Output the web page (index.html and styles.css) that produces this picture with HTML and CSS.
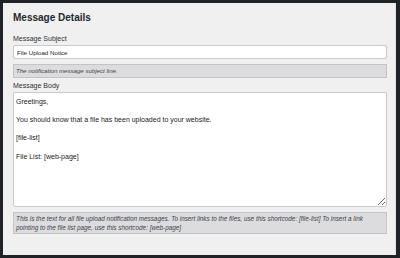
FILE: index.html
```html
<!DOCTYPE html>
<html lang="en">
<head>
  <meta charset="UTF-8" />
  <meta name="viewport" content="width=device-width, initial-scale=1.0"/>
  <title>Message Details</title>
  <link rel="stylesheet" href="styles.css">
</head>
<body>

<div class="panel">
  <h2 class="title">Message Details</h2>

  <label class="field-label" for="subject">Message Subject</label>
  <input class="text-input" id="subject" type="text" value="File Upload Notice" readonly>
  <p class="description">The notification message subject line.</p>

  <label class="field-label" for="body">Message Body</label>
  <textarea class="text-area" id="body" readonly>Greetings,

You should know that a file has been uploaded to your website.

[file-list]

File List: [web-page]</textarea>
  <p class="description">This is the text for all file upload notification messages. To insert links to the files, use this shortcode: [file-list] To insert a link pointing to the file list page, use this shortcode: [web-page]</p>
</div>

</body>
</html>
```

FILE: styles.css
```css
* {
  box-sizing: border-box;
}

body {
  margin: 0;
  height: 258px;
  padding: 3px 4px 3px 3px;
  background: #1f2327;
  font-family: 'Liberation Sans', Arial, sans-serif;
  color: #1d2327;
  overflow: hidden;
}

.panel {
  height: 252px;
  background: #f0f0f1;
  border-right: 1px solid #e2e2e4;
  padding: 8px 8px 0 10px;
  display: flex;
  flex-direction: column;
}

.title {
  margin: 0 0 9px;
  font-size: 10px;
  line-height: 14px;
  font-weight: bold;
  color: #23282d;
}

.field-label {
  font-size: 7px;
  line-height: 9px;
  margin-bottom: 2px;
  color: #2c3338;
}

.text-input,
.text-area {
  width: 100%;
  font-family: 'Liberation Sans', Arial, sans-serif;
  color: #1d2327;
  background: #fff;
  border: 1px solid #c9cacc;
  border-radius: 2px;
  outline: none;
}

.text-input {
  flex: none;
  height: 14px;
  padding: 0 3px;
  font-size: 6.2px;
}

.text-area {
  flex: none;
  height: 115px;
  padding: 3.5px 2px 2px;
  font-size: 7px;
  line-height: 9.2px;
  resize: vertical;
}

.description {
  margin: 5px 0 3px;
  padding: 2px 2px;
  background: #dcdcde;
  border: 1px solid #c3c4c7;
  font-size: 6.1px;
  line-height: 8px;
  font-style: italic;
  color: #3c434a;
}

.text-area + .description {
  padding: 2px 6px 1px 2px;
  font-size: 6.35px;
  line-height: 8.5px;
}
```
